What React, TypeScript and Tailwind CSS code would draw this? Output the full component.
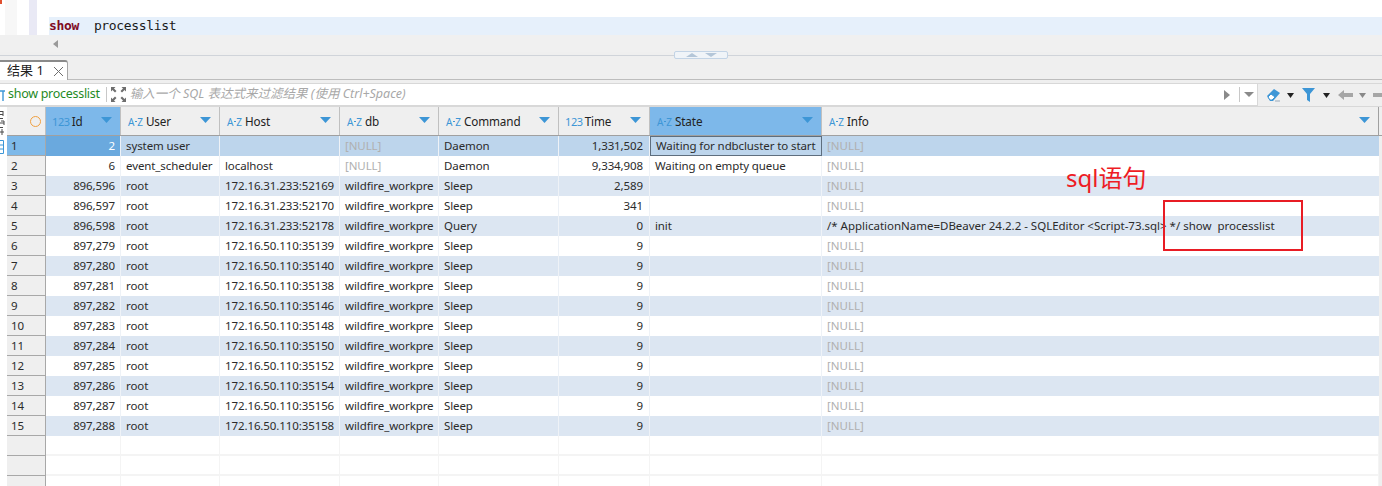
import React from "react";

const widths = ["w-[75px]", "w-[99px]", "w-[120px]", "w-[99px]", "w-[120px]", "w-[91px]", "w-[172px]", "w-[557px]"];

type Row = [string, string, string, string, string, string, string, string];
const N = "[NULL]";
const hosts = ["", "localhost", "172.16.31.233:52169", "172.16.31.233:52170", "172.16.31.233:52178", "172.16.50.110:35139", "172.16.50.110:35140", "172.16.50.110:35138", "172.16.50.110:35146", "172.16.50.110:35148", "172.16.50.110:35150", "172.16.50.110:35152", "172.16.50.110:35154", "172.16.50.110:35156", "172.16.50.110:35158"];
const ids = ["2", "6", "896,596", "896,597", "896,598", "897,279", "897,280", "897,281", "897,282", "897,283", "897,284", "897,285", "897,286", "897,287", "897,288"];
const times = ["1,331,502", "9,334,908", "2,589", "341", "0", "9", "9", "9", "9", "9", "9", "9", "9", "9", "9"];

const rows: Row[] = ids.map((id, i) => [
  id,
  i === 0 ? "system user" : i === 1 ? "event_scheduler" : "root",
  hosts[i],
  i < 2 ? N : "wildfire_workpre",
  i < 2 ? "Daemon" : i === 4 ? "Query" : "Sleep",
  times[i],
  i === 0 ? "Waiting for ndbcluster to start" : i === 1 ? "Waiting on empty queue" : i === 4 ? "init" : "",
  i === 4 ? "/* ApplicationName=DBeaver 24.2.2 - SQLEditor <Script-73.sql> */ show  processlist" : N,
]);

const columns: [string, string][] = [
  ["123", "Id"], ["AZ", "User"], ["AZ", "Host"], ["AZ", "db"], ["AZ", "Command"], ["123", "Time"], ["AZ", "State"], ["AZ", "Info"],
];

function TypeIcon({ kind }: { kind: string }) {
  if (kind === "123") return <span className="ml-[-1px] mr-[2px] text-[11px] leading-none tracking-[-0.4px] text-[#3d96d6]">123</span>;
  return (
    <span className="mr-[3px] flex items-center text-[10px] leading-none text-[#3d96d6]">
      A<span className="mx-[0.5px] h-[1px] w-[2px] bg-[#3d96d6]" />Z
    </span>
  );
}

function SortArrow() {
  return (
    <svg width="11" height="6" viewBox="0 0 11 6" className="absolute right-[8px] top-[10px]">
      <path d="M0 0h11L5.5 6z" fill="#3d96d6" />
    </svg>
  );
}

function Caret({ color = "#222" }: { color?: string }) {
  return (
    <svg width="7" height="5" viewBox="0 0 7 5" className="shrink-0">
      <path d="M0 0h7L3.5 5z" fill={color} />
    </svg>
  );
}

function Focus() {
  return (
    <svg width="15" height="15" viewBox="0 0 15 15" className="ml-[4px] shrink-0" fill="#6e6e6e">
      <path d="M0 0h4.5L3 1.5 5.5 4 4 5.5 1.5 3 0 4.5zM15 0v4.5L13.5 3 11 5.5 9.5 4 12 1.5 10.5 0zM15 15h-4.5l1.5-1.5L9.5 11 11 9.5 13.5 12 15 10.5zM0 15v-4.5L1.5 12 4 9.5 5.5 11 3 13.5 4.5 15z" />
    </svg>
  );
}

export default function App() {
  return (
    <div
      className="relative h-[486px] w-[1382px] overflow-hidden bg-white text-[11.5px] tracking-[-0.1px] text-[#2b2b2b]"
      style={{ fontFamily: '"Noto Sans", "Noto Sans CJK SC", sans-serif' }}
    >
      {/* editor */}
      <div className="flex h-[35px]">
        <div className="flex h-full w-[49px] shrink-0">
          <div className="relative w-[5px] bg-white">
            <div className="absolute left-0 top-0 h-[4px] w-[2px] bg-[#e05030]" />
          </div>
          <div className="w-[12px] bg-[#f7f7f7]" />
          <div className="w-[12px] bg-white" />
          <div className="w-[8px] bg-[#e9e9f5]" />
          <div className="w-[12px] bg-white" />
        </div>
        <div className="flex flex-1 flex-col">
          <div className="h-[17px]" />
          <div
            className="flex h-[18px] items-center whitespace-pre bg-[#e6f0fb] text-[13px] tracking-[-0.35px] text-[#1a1a1a]"
            style={{ fontFamily: '"DejaVu Sans Mono", monospace' }}
          >
            <span className="font-bold text-[#7f0c24]">show</span>
            {"  processlist"}
          </div>
        </div>
      </div>
      {/* horizontal scroll */}
      <div className="flex h-[17px] items-center bg-[#f0f0f0]">
        <div className="ml-[53px] h-0 w-0 border-y-[4px] border-r-[5px] border-y-transparent border-r-[#9a9a9a]" />
      </div>
      {/* sash */}
      <div className="relative h-[8px] bg-[#efefef]">
        <div className="absolute left-0 right-0 top-[3px] h-[1px] bg-[#d0d4da]" />
        <div className="absolute left-[674px] top-[-1px] flex h-[8px] w-[54px] items-center justify-center gap-[7px] rounded-[2px] border border-[#c3d4e6] bg-[#f0f4f8]">
          <div className="h-0 w-0 border-x-[6px] border-b-[4px] border-x-transparent border-b-[#b4c6d8]" />
          <div className="h-0 w-0 border-x-[6px] border-t-[4px] border-x-transparent border-t-[#b4c6d8]" />
        </div>
      </div>
      {/* tab bar */}
      <div className="flex h-[20px] border-b border-[#bdbdbd] bg-[#efefef]">
        <div className="flex h-[20px] w-[68px] items-center rounded-tr-[3px] border-r border-t-[2px] border-[#a6a6a6] border-t-[#8a8a8a] bg-white pl-[7px] text-[13px] tracking-normal text-[#222]">
          结果 1
          <svg width="11" height="11" viewBox="0 0 11 11" className="ml-[9px]" stroke="#6e6e6e" fill="none">
            <path d="M1 1l9 9M10 1l-9 9" />
          </svg>
        </div>
      </div>
      {/* filter bar */}
      <div className="h-[4px] border-b border-[#d8d8d8] bg-[#efefef]" />
      <div className="flex h-[22px] items-stretch bg-[#efefef]">
        <div className="flex w-[1261px] items-center border-b-[1px] border-r-[1px] border-[#d8d8d8] bg-white">
          <svg width="7" height="14" viewBox="0 0 7 14" className="mr-[1px] shrink-0" fill="none" stroke="#3d96d6" strokeWidth="1.4">
            <path d="M0 3h5M3 3v10" />
          </svg>
          <span className="text-[12.5px] tracking-[-0.28px] text-[#1f8a1f]">show processlist</span>
          <div className="ml-[6px] h-[15px] w-[1px] bg-[#c8c8c8]" />
          <Focus />
          <span className="ml-[4px] text-[12.5px] italic tracking-normal text-[#a8a8a8]">输入一个 SQL 表达式来过滤结果 (使用 Ctrl+Space)</span>
          <div className="ml-auto mr-[9px] h-0 w-0 border-y-[5px] border-l-[6px] border-y-transparent border-l-[#8a8a8a]" />
          <div className="mr-[4px] h-[15px] w-[1px] bg-[#c8c8c8]" />
          <div className="mr-[3px] h-0 w-0 border-x-[5px] border-t-[5px] border-x-transparent border-t-[#8a8a8a]" />
        </div>
        <div className="flex flex-1 items-center pl-[8px]">
          <svg width="15" height="14" viewBox="0 0 15 14" className="shrink-0">
            <path d="M1 8l7-7 6 4-7 8H4z" fill="#3d96d6" />
            <path d="M2 9l3-3 4 3-3 3H4z" fill="#fff" stroke="#3d96d6" />
            <path d="M9 13h5" stroke="#9ab" />
          </svg>
          <div className="ml-[6px]"><Caret /></div>
          <svg width="13" height="14" viewBox="0 0 13 14" className="ml-[8px] shrink-0">
            <path d="M0 0h13L8 6v8L5 12V6z" fill="#3d96d6" />
          </svg>
          <div className="ml-[8px]"><Caret /></div>
          <svg width="15" height="10" viewBox="0 0 15 10" className="ml-[8px] shrink-0">
            <path d="M0 5l6-5v3h9v4H6v3z" fill="#a6a6a6" />
          </svg>
          <div className="ml-[6px]"><Caret color="#888" /></div>
          <div className="ml-[7px] h-[4px] w-[9px] shrink-0 bg-[#a6a6a6]" />
        </div>
      </div>
      {/* grid */}
      <div className="flex border-t border-[#d8d8d8] bg-[#efefef]">
        <div className="relative w-[7px] shrink-0 bg-white">
          <svg width="5" height="44" viewBox="0 0 5 44" className="absolute left-0 top-[3px]" fill="none">
            <path d="M0 1.500h3M3 1v5M0 4.500h3M0 8.500h3M1 11h3v4M0 13h4M0 17.500h3M2 19v6M0 22h4" stroke="#4a4a4a" />
            <path d="M0 30.500h3.500v13H0M0 35h3.500M0 39h3.500" stroke="#3d96d6" />
          </svg>
        </div>
        <div className="w-[1375px]">
          {/* header */}
          <div className="flex h-[29px] border-b border-[#a0a0a0]">
            <div className="flex w-[39px] shrink-0 items-center justify-end border-r border-[#c0c0c0] pr-[4px]">
              <div className="h-[11px] w-[11px] rounded-full border-[1.5px] border-[#f0a040]" />
            </div>
            {columns.map(([kind, name], i) => {
              const sel = i === 0 || i === 6;
              return (
                <div
                  key={name}
                  className={`relative flex shrink-0 items-center pl-[7px] pt-[1px] ${widths[i]} ${i === 7 ? "border-r border-[#a0a0a0]" : "border-r border-[#c0c0c0]"} ${sel ? "bg-[#7db8ea]" : ""}`}
                >
                  <TypeIcon kind={kind} />
                  <span className="text-[11.7px] tracking-[-0.1px] text-[#222]">{name}</span>
                  <SortArrow />
                </div>
              );
            })}
          </div>
          {/* rows */}
          {rows.map((r, i) => {
            const sel = i === 0;
            const bg = sel ? "bg-[#bdd5ec]" : i % 2 === 0 ? "bg-[#dce6f2]" : "bg-white";
            return (
              <div key={i} className="flex h-[20px]">
                <div className={`flex w-[39px] shrink-0 items-center border-b border-r border-[#a8a8a8] pl-[4px] ${sel ? "bg-[#7eb9e9]" : "bg-[#efefef]"}`}>
                  {i + 1}
                </div>
                {r.map((c, j) => {
                  const isNull = c === N;
                  const right = j === 0 || j === 5;
                  const focus = sel && j === 6;
                  const idSel = sel && j === 0;
                  return (
                    <div
                      key={j}
                      className={`relative flex shrink-0 items-center whitespace-pre pl-[5px] ${j === 5 ? "pr-[6px]" : "pr-[5px]"} ${j === 7 ? "tracking-[-0.01px]" : ""} ${widths[j]} ${right ? "justify-end" : ""} ${bg} ${idSel ? "!bg-[#6aa9de] text-white" : ""} ${isNull ? "text-[#b0b0b0]" : ""} ${focus ? "border border-[#5e6e7e]" : "border-r border-[#eef2f7]"} ${j === 7 ? "!border-r-0" : ""}`}
                    >
                      {c}
                    </div>
                  );
                })}
              </div>
            );
          })}
          {/* empty rows */}
          {[0, 1, 2].map((k) => (
            <div key={k} className="flex h-[20px]">
              <div className="w-[39px] shrink-0 border-b border-r border-[#a8a8a8] bg-[#efefef]" />
              {widths.map((w, j) => (
                <div key={j} className={`${w} shrink-0 border-b-[2px] border-r border-[#f4f4f4] bg-white`} />
              ))}
            </div>
          ))}
        </div>
      </div>
      {/* annotations */}
      <div className="absolute left-[1066px] top-[162px] text-[24px] leading-[32px] tracking-normal text-[#ee1c25]">sql语句</div>
      <div className="absolute left-[1163px] top-[200px] h-[51px] w-[140px] border-2 border-[#e81c24]" />
    </div>
  );
}
